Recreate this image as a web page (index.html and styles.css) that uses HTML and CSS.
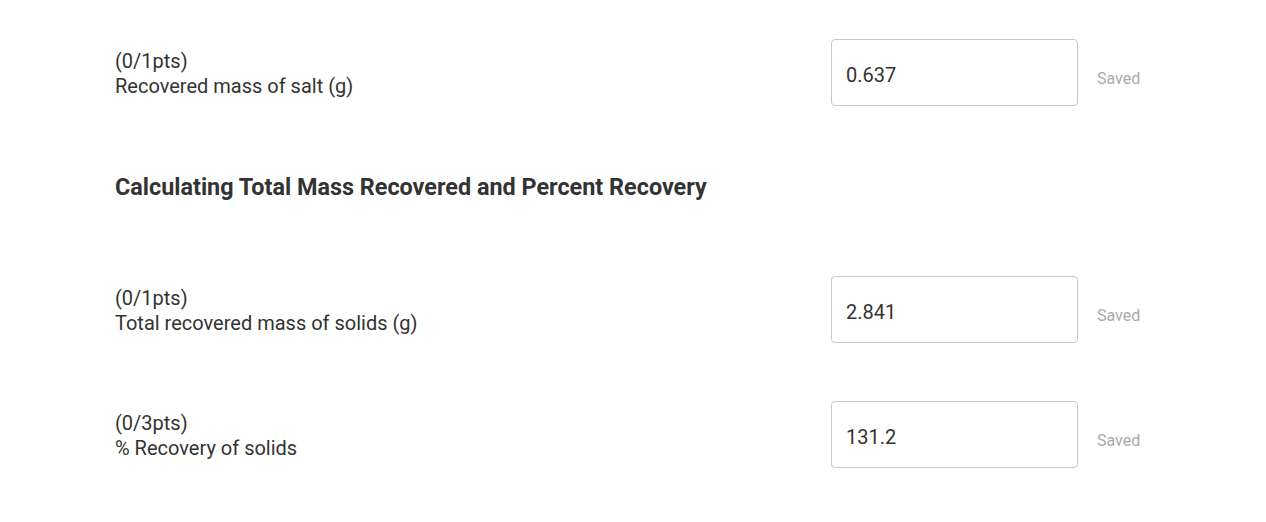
FILE: index.html
```html
<!DOCTYPE html>
<html lang="en">
<head>
    <meta charset="UTF-8">
    <meta name="viewport" content="width=device-width, initial-scale=1.0">
    <title>Total Mass Recovered</title>
    <link rel="stylesheet" href="styles.css">
</head>
<body>

<div class="worksheet">
    <div class="question">
        <div class="question-label">
            <div>(0/1pts)</div>
            <div>Recovered mass of salt (g)</div>
        </div>
        <input class="answer" type="text" value="0.637">
        <span class="status">Saved</span>
    </div>

    <h3 class="section-title">Calculating Total Mass Recovered and Percent Recovery</h3>

    <div class="question">
        <div class="question-label">
            <div>(0/1pts)</div>
            <div>Total recovered mass of solids (g)</div>
        </div>
        <input class="answer" type="text" value="2.841">
        <span class="status">Saved</span>
    </div>

    <div class="question">
        <div class="question-label">
            <div>(0/3pts)</div>
            <div>% Recovery of solids</div>
        </div>
        <input class="answer" type="text" value="131.2">
        <span class="status">Saved</span>
    </div>
</div>

</body>
</html>
```

FILE: styles.css
```css
body {
    font-family: Roboto, "Noto Sans", sans-serif;
    background-color: #ffffff;
    color: #333333;
    margin: 0;
}

.worksheet {
    padding: 39px 0 0 115px;
}

.question {
    display: flex;
    align-items: center;
    margin-bottom: 58px;
}

.question-label {
    width: 716px;
    padding-top: 2px;
    font-size: 20px;
    line-height: 25px;
}

.answer {
    box-sizing: border-box;
    width: 247px;
    height: 67px;
    padding: 4px 14px 0 14px;
    border: 1px solid #c8c8c8;
    border-radius: 4px;
    font-family: Roboto, "Noto Sans", sans-serif;
    font-size: 20px;
    color: #333333;
    background-color: #ffffff;
    outline: none;
}

.status {
    margin-left: 19px;
    padding-top: 11px;
    font-size: 16px;
    color: #aaaaaa;
}

.section-title {
    font-size: 23.4px;
    line-height: 28px;
    font-weight: bold;
    margin: 67px 0 75px 0;
}
```
